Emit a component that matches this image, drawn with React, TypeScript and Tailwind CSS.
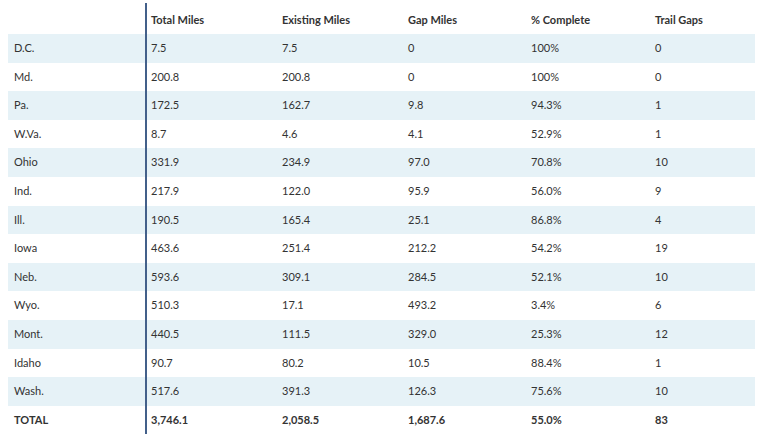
import React from 'react';

const rows = [
  ['D.C.', '7.5', '7.5', '0', '100%', '0'],
  ['Md.', '200.8', '200.8', '0', '100%', '0'],
  ['Pa.', '172.5', '162.7', '9.8', '94.3%', '1'],
  ['W.Va.', '8.7', '4.6', '4.1', '52.9%', '1'],
  ['Ohio', '331.9', '234.9', '97.0', '70.8%', '10'],
  ['Ind.', '217.9', '122.0', '95.9', '56.0%', '9'],
  ['Ill.', '190.5', '165.4', '25.1', '86.8%', '4'],
  ['Iowa', '463.6', '251.4', '212.2', '54.2%', '19'],
  ['Neb.', '593.6', '309.1', '284.5', '52.1%', '10'],
  ['Wyo.', '510.3', '17.1', '493.2', '3.4%', '6'],
  ['Mont.', '440.5', '111.5', '329.0', '25.3%', '12'],
  ['Idaho', '90.7', '80.2', '10.5', '88.4%', '1'],
  ['Wash.', '517.6', '391.3', '126.3', '75.6%', '10'],
];

const headers = ['', 'Total Miles', 'Existing Miles', 'Gap Miles', '% Complete', 'Trail Gaps'];

const grid = 'grid grid-cols-[137px_133px_126px_123px_124px_1fr]';

function Row({ cells, striped, bold }: { cells: string[]; striped?: boolean; bold?: boolean }) {
  return (
    <div className={`${grid} h-[28.6px] ${striped ? 'bg-[#e6f2f7]' : ''} ${bold ? 'font-bold' : ''}`}>
      {cells.map((c, i) => (
        <div
          key={i}
          className={`flex items-center ${i === 0 ? 'pl-[6px]' : 'pl-[4px]'} ${i === 1 ? 'border-l-2 border-[#43608a]' : ''}`}
        >
          {c}
        </div>
      ))}
    </div>
  );
}

export default function App() {
  return (
    <div className="w-[768px] h-[441px] bg-white text-[#333] text-[11px] font-['Lato',sans-serif]">
      <div className="pl-[8px] pr-[13px] pt-[3px]">
        <div className={`${grid} h-[31px] font-bold`}>
          {headers.map((h, i) => (
            <div
              key={i}
              className={`flex items-center pt-[4px] ${i === 0 ? 'pl-[6px]' : 'pl-[4px]'} ${i === 1 ? 'border-l-2 border-[#43608a]' : ''}`}
            >
              {h}
            </div>
          ))}
        </div>
        {rows.map((r, i) => (
          <Row key={r[0]} cells={r} striped={i % 2 === 0} />
        ))}
        <Row cells={['TOTAL', '3,746.1', '2,058.5', '1,687.6', '55.0%', '83']} bold />
      </div>
    </div>
  );
}
